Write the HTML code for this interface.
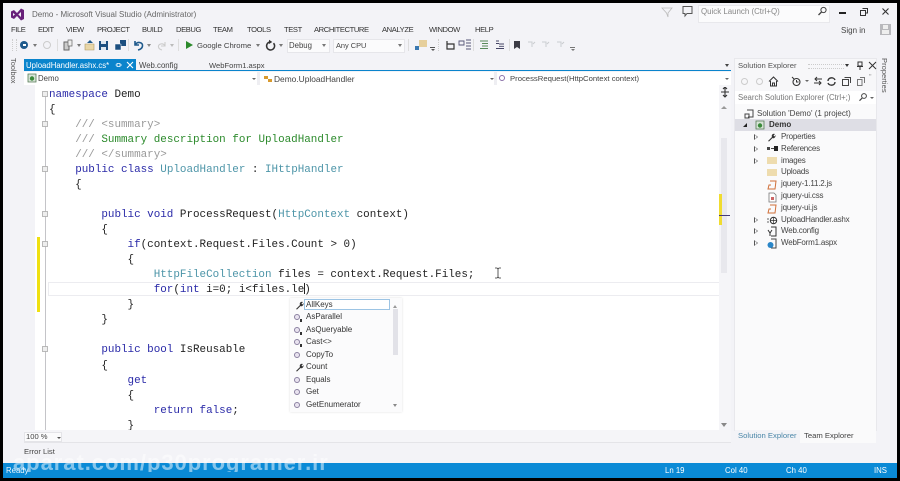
<!DOCTYPE html>
<html><head><meta charset="utf-8">
<style>
html,body{margin:0;padding:0;background:#000;}
body{width:900px;height:481px;overflow:hidden;position:relative;}
#w{position:absolute;left:0;top:0;width:900px;height:481px;background:#000;overflow:hidden;filter:blur(.35px);font-family:"Liberation Sans",sans-serif;font-size:9px;color:#333;}
#w div,#w span.a,#w svg{position:absolute;}
.t{white-space:nowrap;}
.b{position:absolute;left:3px;top:3px;width:894px;height:460px;background:#f3f3f7;}
.m{top:25px;font-size:7.6px;letter-spacing:-.4px;color:#333;white-space:nowrap;}
.c{left:49px;font-family:"Liberation Mono",monospace;font-size:10.92px;line-height:15px;height:15px;white-space:pre;color:#222;}
.k{color:#2a2aa8;}.g{color:#2b8a2b;}.y{color:#999;}.u{color:#4d95a8;}
.s{left:781px;font-size:8px;letter-spacing:-.2px;color:#444;white-space:nowrap;}
.l{left:306px;font-size:8px;color:#333;white-space:nowrap;}
.ar{width:0;height:0;border-left:4px solid #555;border-top:3px solid transparent;border-bottom:3px solid transparent;left:754px;}
.ar::after{content:"";position:absolute;left:-3.2px;top:-2px;width:0;height:0;border-left:2.2px solid #fafafb;border-top:2px solid transparent;border-bottom:2px solid transparent;}
.ic{left:294px;width:4px;height:4px;border:1px solid #8a80a0;border-radius:50%;background:#e9e3f0;}
.ex{left:300px;width:2px;height:3px;background:#333;}
.fm{left:767px;width:10px;height:7px;background:#eedcae;}
</style></head>
<body>
<div id="w">
<div class="b"></div>

<!-- title -->
<svg style="left:10px;top:7px" width="15" height="15" viewBox="0 0 15 15"><path d="M1 4.5 L4 3 L7 6 L11 1.5 L14 3 V12 L11 13.5 L7 9 L4 12 L1 10.5 Z M3 6 V9 L5 7.5 Z M11 5 L8.3 7.5 L11 10 Z" fill="#68217a" fill-rule="evenodd"/></svg>
<div class="t" style="left:32px;top:10px;font-size:8px;color:#666">Demo - Microsoft Visual Studio (Administrator)</div>

<!-- title right -->
<svg style="left:660px;top:6px" width="14" height="12"><path d="M2 2 H12 L8 7 V11 L6.5 7 Z" fill="none" stroke="#bbb" stroke-width=".8"/></svg>
<svg style="left:681px;top:5px" width="14" height="13"><path d="M2 1.5 H11 V8.5 H6 L4 11 V8.5 H2 Z" fill="none" stroke="#555" stroke-width="1"/></svg>
<div style="left:698px;top:5px;width:130px;height:16px;background:#fbfbfc;border:1px solid #e8e8ec"></div>
<div class="t" style="left:701px;top:7px;font-size:7.9px;color:#888">Quick Launch (Ctrl+Q)</div>
<svg style="left:817px;top:6px" width="11" height="11"><circle cx="6.5" cy="4" r="2.6" fill="none" stroke="#444"/><path d="M4.5 6 L1.5 9" stroke="#444" stroke-width="1.3"/></svg>
<div style="left:839px;top:12px;width:7px;height:2px;background:#222"></div>
<svg style="left:859px;top:7px" width="10" height="10"><path d="M3.5 1.5H8.5V6H6.5M1.5 3.5H6.5V8.5H1.5Z" fill="none" stroke="#333"/></svg>
<svg style="left:881px;top:7px" width="10" height="10"><path d="M1.5 1.5L7.5 7.5M7.5 1.5L1.5 7.5" stroke="#333" stroke-width="1.1"/></svg>

<!-- menu -->
<div class="m" style="left:11px">FILE</div>
<div class="m" style="left:38px">EDIT</div>
<div class="m" style="left:66px">VIEW</div>
<div class="m" style="left:97px">PROJECT</div>
<div class="m" style="left:142px">BUILD</div>
<div class="m" style="left:176px">DEBUG</div>
<div class="m" style="left:213px">TEAM</div>
<div class="m" style="left:247px">TOOLS</div>
<div class="m" style="left:284px">TEST</div>
<div class="m" style="left:314px">ARCHITECTURE</div>
<div class="m" style="left:382px">ANALYZE</div>
<div class="m" style="left:429px">WINDOW</div>
<div class="m" style="left:475px">HELP</div>
<div class="t" style="left:841px;top:26px;font-size:8px;color:#444">Sign in</div>
<div style="left:880px;top:24px;width:11px;height:11px;background:#b8b8bc"></div>
<div style="left:883px;top:25px;width:5px;height:4px;background:#eee"></div>
<div style="left:882px;top:30px;width:7px;height:4px;background:#eee"></div>

<!-- toolbar -->
<div style="left:12px;top:39px;width:3px;height:12px;border-left:1px dotted #ccc;border-right:1px dotted #ccc"></div>
<div style="left:20px;top:41px;width:8px;height:8px;border-radius:50%;background:#1f5a8c"></div>
<div style="left:23px;top:44px;width:3px;height:2px;background:#fff"></div>
<div style="left:33px;top:44px;width:0;height:0;border:2px solid transparent;border-top:3px solid #777"></div>
<div style="left:43px;top:41px;width:6px;height:6px;border-radius:50%;border:1px solid #ccc"></div>
<div style="left:57px;top:39px;width:1px;height:12px;background:#ddd"></div>
<svg style="left:62px;top:39px" width="12" height="13"><path d="M2 3H7V11H2Z" fill="#ccc" stroke="#666"/><path d="M6 1H10V7H6Z" fill="#eee" stroke="#666" stroke-width=".7"/></svg>
<div style="left:77px;top:44px;width:0;height:0;border:2px solid transparent;border-top:3px solid #777"></div>
<svg style="left:84px;top:39px" width="12" height="13"><path d="M1 5H10V11H1Z" fill="#e8d6a8" stroke="#b09a60" stroke-width=".6"/><path d="M6 1L3 4H9Z" fill="#1f5a8c"/></svg>
<svg style="left:98px;top:40px" width="11" height="11"><path d="M1 1H10V10H1Z" fill="#1c4f80"/><path d="M3 1H8V4H3ZM3 7H8V10H3Z" fill="#dfe8f0"/></svg>
<svg style="left:114px;top:39px" width="13" height="12"><path d="M6 1H12V7H6Z" fill="#1c4f80"/><path d="M1 5H7V11H1Z" fill="#1c4f80" stroke="#fff" stroke-width=".5"/></svg>
<div style="left:128px;top:39px;width:1px;height:12px;background:#ddd"></div>
<svg style="left:132px;top:39px" width="13" height="13"><path d="M3 2V6H7M3.3 5.5C6 2 11 3.5 10.5 7C10.2 9 8.5 10.5 6 11" fill="none" stroke="#1f5a8c" stroke-width="1.6"/></svg>
<div style="left:147px;top:44px;width:0;height:0;border:2px solid transparent;border-top:3px solid #888"></div>
<svg style="left:156px;top:40px" width="12" height="12"><path d="M9 2V6H5M9 5.5C6.5 2.5 2 4 2.5 7C2.8 8.5 4 9.5 6 10" fill="none" stroke="#ccc" stroke-width="1.1"/></svg>
<div style="left:170px;top:44px;width:0;height:0;border:2px solid transparent;border-top:3px solid #bbb"></div>
<div style="left:178px;top:39px;width:1px;height:12px;background:#ddd"></div>
<div style="left:186px;top:41px;width:0;height:0;border-left:7px solid #2c8a2c;border-top:4.5px solid transparent;border-bottom:4.5px solid transparent"></div>
<div class="t" style="left:197px;top:41px;font-size:7.7px;color:#444">Google Chrome</div>
<div style="left:256px;top:44px;width:0;height:0;border:2px solid transparent;border-top:3px solid #777"></div>
<svg style="left:264px;top:39px" width="12" height="13"><path d="M9.5 4.2A4 4 0 1 1 6 3" fill="none" stroke="#333" stroke-width="1.5"/><path d="M5 0.8L8.3 3L5 5Z" fill="#333"/></svg>
<div style="left:279px;top:44px;width:0;height:0;border:2px solid transparent;border-top:3px solid #777"></div>
<div style="left:287px;top:39px;width:41px;height:12px;background:#fbfbfc;border:1px solid #e6e6ea"></div>
<div class="t" style="left:289px;top:41px;font-size:7.8px;color:#444">Debug</div>
<div style="left:322px;top:44px;width:0;height:0;border:2px solid transparent;border-top:3px solid #777"></div>
<div style="left:333px;top:39px;width:70px;height:12px;background:#fbfbfc;border:1px solid #e6e6ea"></div>
<div class="t" style="left:336px;top:41px;font-size:7.4px;color:#444">Any CPU</div>
<div style="left:398px;top:44px;width:0;height:0;border:2px solid transparent;border-top:3px solid #777"></div>
<div style="left:408px;top:39px;width:1px;height:12px;background:#ddd"></div>
<svg style="left:414px;top:39px" width="14" height="12"><path d="M5 1H13V8H5Z" fill="#e6cf9c"/><path d="M1 7H5V11H1Z" fill="#3a78b0"/></svg>
<div style="left:430px;top:47px;width:5px;height:1px;background:#555"></div>
<div style="left:431px;top:49px;width:0;height:0;border:2px solid transparent;border-top:2px solid #555"></div>
<div style="left:438px;top:39px;width:3px;height:12px;border-left:1px dotted #ccc"></div>
<svg style="left:445px;top:40px" width="10" height="10"><path d="M2 1V9H9V4H2" fill="none" stroke="#333" stroke-width="1.2"/></svg>
<svg style="left:458px;top:39px" width="14" height="12"><path d="M1 2H6V6H1ZM8 1H13M8 4H13M8 7H13M8 10H13" fill="none" stroke="#557" stroke-width=".9"/></svg>
<div style="left:473px;top:39px;width:1px;height:12px;background:#ddd"></div>
<svg style="left:479px;top:40px" width="10" height="10"><path d="M1 1H9M3 3.5H9M3 6H9M1 8.5H9" stroke="#5a8a5a" stroke-width=".9"/></svg>
<svg style="left:495px;top:40px" width="10" height="10"><path d="M1 1H4M1 3.5H4M4 4H9M4 6.3H9M1 8.5H9" stroke="#446" stroke-width=".9"/></svg>
<div style="left:509px;top:39px;width:1px;height:12px;background:#ddd"></div>
<svg style="left:513px;top:40px" width="8" height="10"><path d="M1 1H7V9L4 7L1 9Z" fill="#3b3b45"/></svg>
<svg style="left:527px;top:40px" width="45" height="10"><path d="M1 2H5V7M6 4L8 2M15 2H19V7M20 4L22 2M30 2H34V7M35 4L37 2" fill="none" stroke="#c9ccd0" stroke-width="1"/></svg>
<div style="left:570px;top:47px;width:5px;height:1px;background:#777"></div>
<div style="left:571px;top:49px;width:0;height:0;border:2px solid transparent;border-top:2px solid #777"></div>

<!-- Toolbox strip -->
<div class="t" style="left:9px;top:58px;font-size:7.4px;color:#555;writing-mode:vertical-rl">Toolbox</div>

<!-- doc tabs -->
<div style="left:24px;top:59px;width:112px;height:12px;background:#0a84cc"></div>
<div class="t" style="left:26px;top:61px;font-size:7.8px;color:#fff">UploadHandler.ashx.cs*</div>
<svg style="left:115px;top:61px" width="8" height="8"><path d="M2 2.5H5V5.5H2ZM5 4H7M0.5 4H2" fill="none" stroke="#fff" stroke-width=".8"/></svg>
<svg style="left:126px;top:61px" width="8" height="8"><path d="M1 1L7 7M7 1L1 7" stroke="#fff" stroke-width="1.1"/></svg>
<div class="t" style="left:139px;top:61px;font-size:7.8px;color:#444">Web.config</div>
<div class="t" style="left:209px;top:61px;font-size:7.6px;color:#444">WebForm1.aspx</div>
<div style="left:725px;top:64px;width:0;height:0;border:2.5px solid transparent;border-top:3px solid #444"></div>
<div style="left:24px;top:70px;width:707px;height:1px;background:#0a84cc"></div>

<!-- nav bar -->
<div style="left:24px;top:72px;width:707px;height:13px;background:#fff"></div>
<div style="left:257px;top:72px;width:3px;height:13px;background:#eeeef2"></div>
<div style="left:494px;top:72px;width:3px;height:13px;background:#eeeef2"></div>
<svg style="left:27px;top:73px" width="10" height="10"><path d="M1 1H9V9H1Z" fill="#d8e4d8" stroke="#557a55" stroke-width=".8"/><circle cx="5" cy="5.5" r="2.2" fill="#3a8a3a"/></svg>
<div class="t" style="left:38px;top:74px;font-size:7.8px;color:#444">Demo</div>
<div style="left:252px;top:78px;width:0;height:0;border:2px solid transparent;border-top:2.5px solid #666"></div>
<svg style="left:263px;top:74px" width="10" height="9"><path d="M1 2H5V5H1ZM5 5H9V8H5Z" fill="#d99a2e"/></svg>
<div class="t" style="left:274px;top:74px;font-size:8.4px;color:#444">Demo.UploadHandler</div>
<div style="left:490px;top:78px;width:0;height:0;border:2px solid transparent;border-top:2.5px solid #666"></div>
<div style="left:499px;top:75px;width:4px;height:4px;border:1px solid #8a70a8;border-radius:50%"></div>
<div class="t" style="left:510px;top:74px;font-size:7.7px;color:#444">ProcessRequest(HttpContext context)</div>
<div style="left:725px;top:78px;width:0;height:0;border:2px solid transparent;border-top:2.5px solid #666"></div>

<!-- editor -->
<div style="left:24px;top:85px;width:11px;height:345px;background:#f3f3f7"></div>
<div style="left:35px;top:85px;width:684px;height:345px;background:#fff"></div>
<div style="left:719px;top:85px;width:12px;height:345px;background:#f5f5f8"></div>
<div style="left:45px;top:92px;width:1px;height:338px;background:#c4c4c8"></div>
<div style="left:37px;top:237px;width:3px;height:75px;background:#efe010"></div>
<div style="left:48px;top:282px;width:671px;height:14px;border:1px solid #ececf0;border-right:none;box-sizing:border-box"></div>

<svg style="left:42px;top:85px" width="8" height="345"><g fill="#eee" stroke="#aaa" stroke-width=".8"><rect x=".5" y="6.5" width="5" height="5"/><rect x=".5" y="36.5" width="5" height="5"/><rect x=".5" y="81.5" width="5" height="5"/><rect x=".5" y="126.5" width="5" height="5"/><rect x=".5" y="156.5" width="5" height="5"/><rect x=".5" y="261.5" width="5" height="5"/></g></svg>

<div class="c" style="top:88px"><span class="k">namespace</span> Demo</div>
<div class="c" style="top:103px">{</div>
<div class="c" style="top:118px">    <span class="y">/// &lt;summary&gt;</span></div>
<div class="c" style="top:133px">    <span class="y">///</span> <span class="g">Summary description for UploadHandler</span></div>
<div class="c" style="top:148px">    <span class="y">/// &lt;/summary&gt;</span></div>
<div class="c" style="top:163px">    <span class="k">public class</span> <span class="u">UploadHandler</span> : <span class="u">IHttpHandler</span></div>
<div class="c" style="top:178px">    {</div>
<div class="c" style="top:208px">        <span class="k">public void</span> ProcessRequest(<span class="u">HttpContext</span> context)</div>
<div class="c" style="top:223px">        {</div>
<div class="c" style="top:238px">            <span class="k">if</span>(context.Request.Files.Count &gt; 0)</div>
<div class="c" style="top:253px">            {</div>
<div class="c" style="top:268px">                <span class="u">HttpFileCollection</span> files = context.Request.Files;</div>
<div class="c" style="top:283px">                <span class="k">for</span>(<span class="k">int</span> i=0; i&lt;files.le)</div>
<div class="c" style="top:298px">            }</div>
<div class="c" style="top:313px">        }</div>
<div class="c" style="top:343px">        <span class="k">public bool</span> IsReusable</div>
<div class="c" style="top:359px">        {</div>
<div class="c" style="top:374px">            <span class="k">get</span></div>
<div class="c" style="top:389px">            {</div>
<div class="c" style="top:404px">                <span class="k">return false</span>;</div>
<div class="c" style="top:419px">            }</div>
<div style="left:304px;top:283px;width:1px;height:11px;background:#222"></div>

<!-- I-beam -->
<svg style="left:494px;top:267px" width="8" height="12"><path d="M1 1H3L4 2L5 1H7M4 2V10M1 11H3L4 10L5 11H7" fill="none" stroke="#333" stroke-width=".8"/></svg>

<!-- scrollbar -->
<svg style="left:719px;top:87px" width="12" height="11"><path d="M6 0V10M2 5H10M4 2L6 0L8 2M4 8L6 10L8 8" fill="none" stroke="#333" stroke-width="1.1"/></svg>
<div style="left:721px;top:103px;width:0;height:0;border:3px solid transparent;border-bottom:3px solid #999"></div>
<div style="left:721px;top:138px;width:6px;height:135px;background:#e8e8ed"></div>
<div style="left:719px;top:194px;width:3px;height:31px;background:#f0dc30"></div>
<div style="left:719px;top:215px;width:11px;height:1px;background:#443a78"></div>
<div style="left:721px;top:423px;width:0;height:0;border:3.5px solid transparent;border-top:4px solid #888"></div>

<!-- zoom bar -->
<div style="left:24px;top:430px;width:707px;height:13px;background:#f5f5f8;border-bottom:1px solid #e4e4e8;box-sizing:border-box"></div>
<div style="left:24px;top:432px;width:38px;height:10px;background:#fbfbfc;border:1px solid #e4e4e8;box-sizing:border-box"></div>
<div class="t" style="left:26px;top:432px;font-size:7.6px;color:#444">100 %</div>
<div style="left:57px;top:437px;width:0;height:0;border:2px solid transparent;border-top:2.5px solid #555"></div>

<!-- completion list -->
<div style="left:290px;top:298px;width:112px;height:114px;background:#fbfbfc;box-shadow:0 0 2px #ddd"></div>
<div style="left:304px;top:299px;width:86px;height:11px;background:#fff;border:1px solid #9cc4e4;box-sizing:border-box"></div>
<div style="left:393px;top:309px;width:5px;height:46px;background:#e2e2e8"></div>
<div style="left:393px;top:303px;width:0;height:0;border:2.5px solid transparent;border-bottom:3px solid #999"></div>
<div style="left:393px;top:404px;width:0;height:0;border:2.5px solid transparent;border-top:3px solid #888"></div>
<svg style="left:295px;top:301px" width="9" height="9"><path d="M1 8L5 4C4 2 6 0 8 1L6.5 2.5L7.5 3.5L8.5 2C9 4 7 6 5.5 5L2 8.5Z" fill="#333"/></svg>
<svg style="left:295px;top:363px" width="9" height="9"><path d="M1 8L5 4C4 2 6 0 8 1L6.5 2.5L7.5 3.5L8.5 2C9 4 7 6 5.5 5L2 8.5Z" fill="#333"/></svg>
<div class="ic" style="top:314px"></div><div class="ex" style="top:319px"></div>
<div class="ic" style="top:327px"></div><div class="ex" style="top:332px"></div>
<div class="ic" style="top:339px"></div><div class="ex" style="top:344px"></div>
<div class="ic" style="top:352px"></div>
<div class="ic" style="top:377px"></div>
<div class="ic" style="top:389px"></div>
<div class="ic" style="top:402px"></div>
<div class="l" style="top:300px">AllKeys</div>
<div class="l" style="top:312px">AsParallel</div>
<div class="l" style="top:325px">AsQueryable</div>
<div class="l" style="top:337px">Cast&lt;&gt;</div>
<div class="l" style="top:350px">CopyTo</div>
<div class="l" style="top:362px">Count</div>
<div class="l" style="top:375px">Equals</div>
<div class="l" style="top:387px">Get</div>
<div class="l" style="top:400px">GetEnumerator</div>

<!-- solution explorer -->
<div style="left:734px;top:58px;width:143px;height:373px;background:#f7f7f9;border:1px solid #e8e8ec;box-sizing:border-box"></div>
<div class="t" style="left:738px;top:61px;font-size:7.7px;color:#555">Solution Explorer</div>
<div style="left:808px;top:64px;width:36px;height:3px;border-top:1px dotted #ccc;border-bottom:1px dotted #ccc"></div>
<div style="left:845px;top:64px;width:0;height:0;border:2.5px solid transparent;border-top:3px solid #333"></div>
<svg style="left:856px;top:61px" width="8" height="10"><path d="M2 1H6V5H2ZM1 5.5H7M4 5.5V9" fill="none" stroke="#333"/></svg>
<svg style="left:868px;top:61px" width="9" height="9"><path d="M1 1L8 8M8 1L1 8" stroke="#333"/></svg>
<!-- SE toolbar -->
<div style="left:741px;top:78px;width:5px;height:5px;border-radius:50%;border:1px solid #ccc"></div>
<div style="left:756px;top:78px;width:5px;height:5px;border-radius:50%;border:1px solid #ccc"></div>
<svg style="left:768px;top:76px" width="11" height="11"><path d="M1 5.5L5.5 1L10 5.5M2.5 5V10H8.5V5M4.5 10V7H6.5V10" fill="none" stroke="#333"/></svg>
<svg style="left:791px;top:76px" width="11" height="11"><circle cx="5.5" cy="6" r="3.5" fill="none" stroke="#333" stroke-width="1.1"/><path d="M5.5 4V6H7.5M1 1L3 3" stroke="#333" fill="none"/></svg>
<div style="left:805px;top:80px;width:0;height:0;border:2px solid transparent;border-top:2.5px solid #666"></div>
<svg style="left:813px;top:76px" width="10" height="11"><path d="M1 7H8M6 5L8 7L6 9M9 3H2M4 1L2 3L4 5" fill="none" stroke="#333"/></svg>
<svg style="left:826px;top:76px" width="11" height="11"><path d="M2 5C2 1 8 1 9 4M9 6C9 10 3 10 2 7" fill="none" stroke="#333" stroke-width="1.4"/></svg>
<svg style="left:841px;top:76px" width="11" height="11"><path d="M3.5 1.5H9.5V7M1.5 3.5H7.5V9.5H1.5Z" fill="none" stroke="#444"/></svg>
<svg style="left:856px;top:76px" width="10" height="11"><path d="M1.5 3.5H6V9.5H1.5ZM4 1.5H8.5V7" fill="none" stroke="#777"/></svg>
<div style="left:869px;top:74px;font-size:7px;color:#999">"</div>
<!-- search -->
<div style="left:735px;top:91px;width:141px;height:13px;background:#fff;border-bottom:1px solid #eee"></div>
<div class="t" style="left:738px;top:93px;font-size:7.8px;color:#777">Search Solution Explorer (Ctrl+;)</div>
<svg style="left:858px;top:92px" width="10" height="10"><circle cx="6" cy="4" r="2.4" fill="none" stroke="#444"/><path d="M4.2 6L1.5 8.7" stroke="#444" stroke-width="1.2"/></svg>
<div style="left:870px;top:97px;width:0;height:0;border:2px solid transparent;border-top:2.5px solid #666"></div>
<!-- tree -->
<div style="left:735px;top:104px;width:141px;height:326px;background:#fafafb"></div>
<div style="left:735px;top:119px;width:141px;height:12px;background:#dedee5"></div>
<svg style="left:744px;top:109px" width="10" height="10"><path d="M3 1H9V8H4M1 5H5V9H1Z" fill="none" stroke="#444"/></svg>
<div class="t" style="left:757px;top:109px;font-size:8px;color:#444">Solution 'Demo' (1 project)</div>
<div style="left:743px;top:123px;width:0;height:0;border-right:4px solid #222;border-top:4px solid transparent"></div>
<svg style="left:755px;top:120px" width="10" height="10"><path d="M1 1H9V9H1Z" fill="#d8e4d8" stroke="#557a55" stroke-width=".8"/><circle cx="5" cy="5.5" r="2.2" fill="#3a8a3a"/></svg>
<div class="t" style="left:769px;top:120px;font-size:8px;color:#333;font-weight:bold">Demo</div>
<div class="ar" style="top:134px"></div><div class="ar" style="top:146px"></div><div class="ar" style="top:158px"></div>
<div class="ar" style="top:217px"></div><div class="ar" style="top:228px"></div><div class="ar" style="top:240px"></div>
<svg style="left:767px;top:133px" width="11" height="9"><path d="M1 8L5 4C4 2 6 0 8 1L6.5 2.5L7.5 3.5L8.5 2C9 4 7 6 5.5 5L2 8.5Z" fill="#333"/></svg>
<div style="left:767px;top:147px;width:3px;height:3px;background:#444"></div>
<div style="left:774px;top:146px;width:4px;height:5px;background:#222"></div>
<div style="left:771px;top:148px;width:3px;height:1px;background:#444"></div>
<div class="fm" style="top:157px"></div><div class="fm" style="top:169px"></div>
<svg style="left:767px;top:180px" width="11" height="11"><path d="M3 1H9L8 9H1L2 5H4" fill="none" stroke="#d0703a" stroke-width="1"/></svg>
<svg style="left:768px;top:192px" width="10" height="11"><path d="M1 1H6L8 3V10H1Z" fill="#fff" stroke="#777" stroke-width=".8"/><path d="M3 5H6V8H3Z" fill="#c66"/></svg>
<svg style="left:767px;top:204px" width="11" height="11"><path d="M3 1H9L8 9H1L2 5H4" fill="none" stroke="#d0703a" stroke-width="1"/></svg>
<svg style="left:767px;top:215px" width="11" height="11"><circle cx="6.5" cy="5.5" r="3.2" fill="none" stroke="#333"/><path d="M3.3 5.5H9.7M6.5 2.3V8.7M0 4H2M0 7H2" stroke="#333" stroke-width=".7"/></svg>
<svg style="left:767px;top:226px" width="11" height="12"><path d="M4 1H9V10H4" fill="none" stroke="#333"/><path d="M1 4L3 7L5 4M3 7V10" fill="none" stroke="#333"/></svg>
<svg style="left:767px;top:238px" width="11" height="12"><path d="M4 1H9V10H4" fill="none" stroke="#444"/><circle cx="3.5" cy="7" r="3" fill="#2a86c8"/></svg>
<div class="s" style="top:132px">Properties</div>
<div class="s" style="top:144px">References</div>
<div class="s" style="top:156px">images</div>
<div class="s" style="top:167px">Uploads</div>
<div class="s" style="top:179px">jquery-1.11.2.js</div>
<div class="s" style="top:191px">jquery-ui.css</div>
<div class="s" style="top:203px">jquery-ui.js</div>
<div class="s" style="top:215px">UploadHandler.ashx</div>
<div class="s" style="top:226px">Web.config</div>
<div class="s" style="top:238px">WebForm1.aspx</div>
<!-- SE tabs -->
<div style="left:735px;top:430px;width:141px;height:13px;background:#f3f3f7"></div>
<div style="left:800px;top:430px;width:76px;height:13px;background:#fafafb"></div>
<div class="t" style="left:738px;top:431px;font-size:7.7px;color:#4a86a8">Solution Explorer</div>
<div class="t" style="left:804px;top:431px;font-size:7.7px;color:#444">Team Explorer</div>

<!-- Properties strip -->
<div class="t" style="left:880px;top:58px;font-size:7.6px;color:#555;writing-mode:vertical-rl">Properties</div>

<!-- error list -->
<div class="t" style="left:24px;top:447px;font-size:7.6px;color:#444">Error List</div>

<!-- status -->
<div style="left:3px;top:463px;width:894px;height:15px;background:#0a8ad6"></div>
<div class="t" style="left:6px;top:466px;font-size:7.8px;color:#eaf6ff">Ready</div>
<div class="t" style="left:665px;top:466px;font-size:7.8px;color:#fff">Ln 19</div>
<div class="t" style="left:725px;top:466px;font-size:7.8px;color:#fff">Col 40</div>
<div class="t" style="left:786px;top:466px;font-size:7.8px;color:#fff">Ch 40</div>
<div class="t" style="left:874px;top:466px;font-size:7.8px;color:#fff">INS</div>
<!-- watermark -->
<div class="t" style="left:13px;top:451px;font-size:22px;font-weight:bold;letter-spacing:.95px;color:rgba(255,255,255,.5);height:21px;line-height:24px;overflow:hidden">aparat.com/p30programer.ir</div>
</div>
</body></html>
